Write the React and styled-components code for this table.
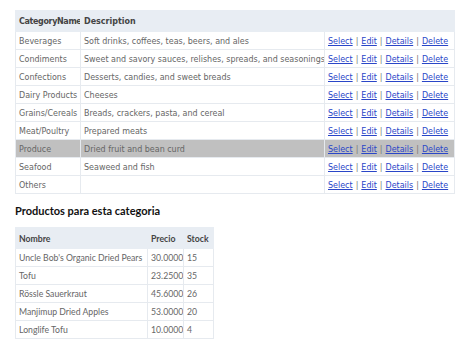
import React from 'react';
import styled, { createGlobalStyle } from 'styled-components';

const GlobalStyle = createGlobalStyle`
  body {
    margin: 0;
    background: #fff;
    font-family: "DejaVu Sans", Verdana, sans-serif;
  }
`

const Page = styled.div`
  padding: 10px 0 0 15px;
`

const Grid = styled.table`
  border-collapse: collapse;
  table-layout: fixed;
  width: ${p => p.width}px;
  font-family: ${p => p.font};
  font-size: ${p => p.size}px;
  color: #666;
`

const Head = styled.th`
  background: #e8edf3;
  color: #444;
  font-weight: bold;
  text-align: left;
  height: 20px;
  padding: 0 2px 0 3px;
  white-space: nowrap;
  overflow: hidden;
  letter-spacing: ${p => p.tight ? '-0.35px' : '0'};
  border: 1px solid #e8edf3;
`

const Cell = styled.td`
  height: 17px;
  padding: 0 2px 0 3px;
  white-space: nowrap;
  overflow: hidden;
  border: 1px solid #e6eaef;
  background: ${p => (p.selected ? '#c0c0c0' : '#fff')};
`

const Link = styled.a`
  color: #2a46c8;
  text-decoration: underline;
  cursor: pointer;
`

const Sep = styled.span`
  color: #777;
  margin: 0 3px;
`

const Title = styled.h3`
  margin: 10px 0 10px;
  font-family: Lato, sans-serif;
  font-size: 11px;
  font-weight: bold;
  letter-spacing: 0;
  color: #111;
`

const categories = [
  ['Beverages', 'Soft drinks, coffees, teas, beers, and ales'],
  ['Condiments', 'Sweet and savory sauces, relishes, spreads, and seasonings'],
  ['Confections', 'Desserts, candies, and sweet breads'],
  ['Dairy Products', 'Cheeses'],
  ['Grains/Cereals', 'Breads, crackers, pasta, and cereal'],
  ['Meat/Poultry', 'Prepared meats'],
  ['Produce', 'Dried fruit and bean curd'],
  ['Seafood', 'Seaweed and fish'],
  ['Others', ''],
]

const products = [
  ["Uncle Bob's Organic Dried Pears", '30.0000', '15'],
  ['Tofu', '23.2500', '35'],
  ['Rössle Sauerkraut', '45.6000', '26'],
  ['Manjimup Dried Apples', '53.0000', '20'],
  ['Longlife Tofu', '10.0000', '4'],
]

const Actions = () => (
  <>
    <Link>Select</Link><Sep>|</Sep>
    <Link>Edit</Link><Sep>|</Sep>
    <Link>Details</Link><Sep>|</Sep>
    <Link>Delete</Link>
  </>
)

const App = () => {
  return (
    <Page>
      <GlobalStyle />
      <Grid width={439} size={8.9} font={'"DejaVu Sans Condensed", "DejaVu Sans", sans-serif'}>
        <colgroup>
          <col style={{ width: 65 }} />
          <col style={{ width: 244 }} />
          <col style={{ width: 130 }} />
        </colgroup>
        <thead>
          <tr>
            <Head tight>CategoryName</Head>
            <Head>Description</Head>
            <Head />
          </tr>
        </thead>
        <tbody>
          {categories.map(([name, desc]) => (
            <tr key={name}>
              <Cell selected={name === 'Produce'}>{name}</Cell>
              <Cell selected={name === 'Produce'}>{desc}</Cell>
              <Cell selected={name === 'Produce'}>
                <Actions />
              </Cell>
            </tr>
          ))}
        </tbody>
      </Grid>

      <Title>Productos para esta categoria</Title>

      <Grid width={198} size={8.7} font={'Lato, sans-serif'}>
        <colgroup>
          <col style={{ width: 132 }} />
          <col style={{ width: 36 }} />
          <col style={{ width: 30 }} />
        </colgroup>
        <thead>
          <tr>
            <Head>Nombre</Head>
            <Head>Precio</Head>
            <Head>Stock</Head>
          </tr>
        </thead>
        <tbody>
          {products.map(([name, price, stock]) => (
            <tr key={name}>
              <Cell>{name}</Cell>
              <Cell>{price}</Cell>
              <Cell>{stock}</Cell>
            </tr>
          ))}
        </tbody>
      </Grid>
    </Page>
  );
};

export default App;
